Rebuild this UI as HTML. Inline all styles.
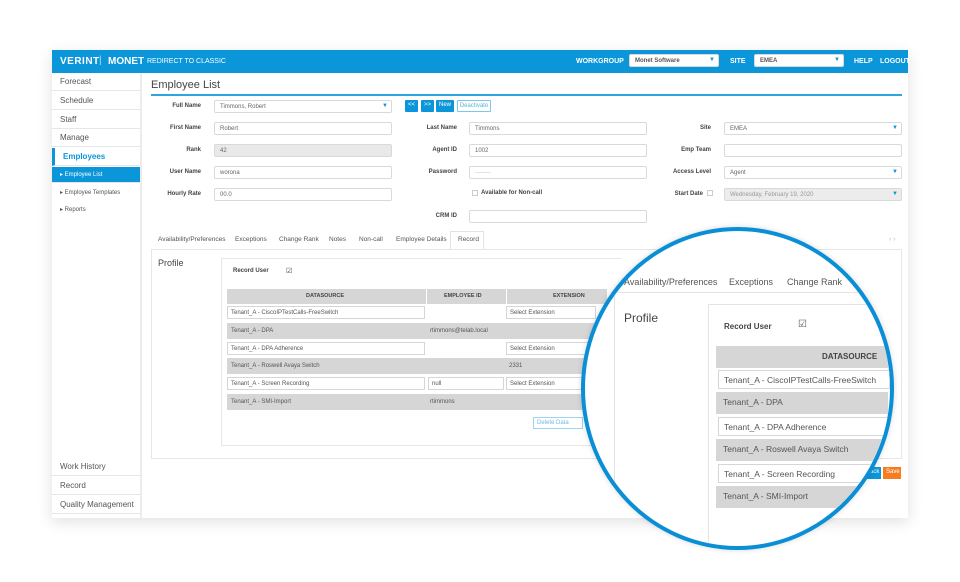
<!DOCTYPE html>
<html><head><style>
*{box-sizing:border-box;margin:0;padding:0}
body{width:960px;height:582px;background:#fff;font-family:"Liberation Sans",sans-serif;position:relative;overflow:hidden;color:#444}
.a{position:absolute}
.frame{left:52px;top:50px;width:856px;height:468px;background:#fff;box-shadow:0 4px 14px rgba(0,0,0,.12)}
.hdr{left:52px;top:50px;width:856px;height:23px;background:#0a96d8;color:#fff;font-size:7px;font-weight:bold}
.sb{left:52px;top:73px;width:90px;height:445px;border-right:2px solid #ececec;background:#fff}
.si{position:absolute;left:0;width:88px;height:18px;border-bottom:1px solid #e6e6e6;font-size:8px;color:#555;padding:4px 0 0 8px}
.lb{position:absolute;font-size:6px;color:#444;text-align:right;font-weight:bold}
.in{position:absolute;height:13px;border:1px solid #d9d9d9;border-radius:2px;font-size:6px;color:#666;padding:3px 0 0 5px;background:#fff}
.arr{position:absolute;right:3px;top:2px;font-size:6px;color:#0a96d8}
.tab{position:absolute;top:236px;font-size:6.5px;color:#555}
.row{position:absolute;left:227px;width:380px;height:16px;font-size:6px;color:#555}
.g{background:#d6d6d6}
.ci{position:absolute;height:13px;border:1px solid #d6d6d6;background:#fff;font-size:6px;padding:3px 0 0 3px;color:#555}
.btn{position:absolute;top:100px;height:12px;background:#0a96d8;color:#fff;font-size:6px;text-align:center;padding-top:2px;border-radius:1px}
</style></head><body>
<div class="a frame"></div>
<div class="a hdr">
 <span class="a" style="left:8px;top:6px;font-size:10px;letter-spacing:.5px">VERINT</span>
 <span class="a" style="left:47px;top:5px;font-size:10px;font-weight:normal;opacity:.7">|</span>
 <span class="a" style="left:56px;top:6px;font-size:10px">MONET</span>
 <span class="a" style="left:95px;top:8px;font-weight:normal">REDIRECT TO CLASSIC</span>
 <span class="a" style="left:524px;top:8px">WORKGROUP</span>
 <div class="in" style="left:577px;top:4px;width:90px;color:#555">Monet Software<span class="arr">▼</span></div>
 <span class="a" style="left:678px;top:8px">SITE</span>
 <div class="in" style="left:702px;top:4px;width:90px;color:#555">EMEA<span class="arr">▼</span></div>
 <span class="a" style="left:802px;top:8px">HELP</span>
 <span class="a" style="left:828px;top:8px">LOGOUT</span>
</div>
<div class="a sb">
 <div class="si" style="top:0">Forecast</div>
 <div class="si" style="top:19px">Schedule</div>
 <div class="si" style="top:38px">Staff</div>
 <div class="si" style="top:56px">Manage</div>
 <div class="si" style="top:75px;color:#0a96d8;font-weight:bold;border-left:3px solid #0a96d8">Employees</div>
 <div class="si" style="top:94px;height:16px;background:#0a96d8;color:#fff;font-size:6px;padding-top:4px">▸ Employee List</div>
 <div class="si" style="top:112px;border:0;font-size:6px">▸ Employee Templates</div>
 <div class="si" style="top:129px;border:0;font-size:6px">▸ Reports</div>
 <div class="si" style="top:385px">Work History</div>
 <div class="si" style="top:404px">Record</div>
 <div class="si" style="top:423px">Quality Management</div>
</div>
<div class="a" style="left:151px;top:79px;font-size:11px;color:#444">Employee List</div>
<div class="a" style="left:151px;top:94px;width:751px;height:2px;background:#2ea6dd"></div>

<div class="lb" style="left:150px;width:51px;top:103px">Full Name</div>
<div class="in" style="left:214px;top:100px;width:178px">Timmons, Robert<span class="arr">▼</span></div>
<div class="btn" style="left:405px;width:13px">&lt;&lt;</div>
<div class="btn" style="left:421px;width:13px">&gt;&gt;</div>
<div class="btn" style="left:436px;width:18px">New</div>
<div class="btn" style="left:457px;width:34px;background:#fff;border:1px solid #7cc7ec;color:#5ab3e0">Deactivate</div>

<div class="lb" style="left:150px;width:51px;top:125px">First Name</div><div class="in" style="left:214px;top:122px;width:178px">Robert</div>
<div class="lb" style="left:150px;width:51px;top:147px">Rank</div><div class="in" style="left:214px;top:144px;width:178px;background:#e9e9e9">42</div>
<div class="lb" style="left:150px;width:51px;top:169px">User Name</div><div class="in" style="left:214px;top:166px;width:178px">worona</div>
<div class="lb" style="left:150px;width:51px;top:191px">Hourly Rate</div><div class="in" style="left:214px;top:188px;width:178px">00.0</div>

<div class="lb" style="left:400px;width:57px;top:125px">Last Name</div><div class="in" style="left:469px;top:122px;width:178px">Timmons</div>
<div class="lb" style="left:400px;width:57px;top:147px">Agent ID</div><div class="in" style="left:469px;top:144px;width:178px">1002</div>
<div class="lb" style="left:400px;width:57px;top:169px">Password</div><div class="in" style="left:469px;top:166px;width:178px">········</div>
<div class="a" style="left:472px;top:190px;width:6px;height:6px;border:1px solid #ccc"></div><div class="lb" style="left:481px;top:190px">Available for Non-call</div>
<div class="lb" style="left:400px;width:57px;top:213px">CRM ID</div><div class="in" style="left:469px;top:210px;width:178px"></div>

<div class="lb" style="left:650px;width:61px;top:125px">Site</div><div class="in" style="left:724px;top:122px;width:178px">EMEA<span class="arr">▼</span></div>
<div class="lb" style="left:650px;width:61px;top:147px">Emp Team</div><div class="in" style="left:724px;top:144px;width:178px"></div>
<div class="lb" style="left:650px;width:61px;top:169px">Access Level</div><div class="in" style="left:724px;top:166px;width:178px">Agent<span class="arr">▼</span></div>
<div class="lb" style="left:650px;width:53px;top:191px">Start Date</div><div class="a" style="left:707px;top:190px;width:6px;height:6px;border:1px solid #ccc"></div>
<div class="in" style="left:724px;top:188px;width:178px;background:#ececec;color:#999">Wednesday, February 19, 2020<span class="arr">▼</span></div>

<div class="tab" style="left:158px">Availability/Preferences</div>
<div class="tab" style="left:235px">Exceptions</div>
<div class="tab" style="left:279px">Change Rank</div>
<div class="tab" style="left:329px">Notes</div>
<div class="tab" style="left:359px">Non-call</div>
<div class="tab" style="left:396px">Employee Details</div>
<div class="a" style="left:450px;top:231px;width:34px;height:19px;border:1px solid #e3e3e3;border-bottom:none;background:#fff"></div>
<div class="tab" style="left:458px">Record</div>
<div class="a" style="left:889px;top:236px;font-size:7px;color:#bbb">‹ ›</div>
<div class="a" style="left:151px;top:249px;width:751px;height:210px;border:1px solid #e6e6e6"></div>
<div class="a" style="left:158px;top:258px;font-size:9px;color:#444">Profile</div>
<div class="a" style="left:221px;top:258px;width:400px;height:188px;border:1px solid #e6e6e6;border-right:none"></div>
<div class="lb" style="left:233px;top:268px">Record User</div>
<div class="a" style="left:286px;top:267px;font-size:7px">☑</div>
<div class="row g" style="top:289px;height:15px;font-weight:bold;font-size:5.5px;color:#444">
 <span class="a" style="left:79px;top:4px">DATASOURCE</span><span class="a" style="left:217px;top:4px">EMPLOYEE ID</span><span class="a" style="left:326px;top:4px">EXTENSION</span>
 <span class="a" style="left:199px;top:0;width:1px;height:15px;background:#fff"></span><span class="a" style="left:279px;top:0;width:1px;height:15px;background:#fff"></span></div>
<div class="ci" style="left:227px;top:306px;width:198px">Tenant_A - CiscoIPTestCalls-FreeSwitch</div><div class="ci" style="left:506px;top:306px;width:90px">Select Extension</div>
<div class="row g" style="top:323px"><span class="a" style="left:4px;top:5px">Tenant_A - DPA</span><span class="a" style="left:203px;top:5px">rtimmons@telab.local</span></div>
<div class="ci" style="left:227px;top:342px;width:198px">Tenant_A - DPA Adherence</div><div class="ci" style="left:506px;top:342px;width:90px">Select Extension</div>
<div class="row g" style="top:358px"><span class="a" style="left:4px;top:5px">Tenant_A - Roswell Avaya Switch</span><span class="a" style="left:282px;top:5px">2331</span></div>
<div class="ci" style="left:227px;top:377px;width:198px">Tenant_A - Screen Recording</div><div class="ci" style="left:428px;top:377px;width:76px">null</div><div class="ci" style="left:506px;top:377px;width:90px">Select Extension</div>
<div class="row g" style="top:394px"><span class="a" style="left:4px;top:5px">Tenant_A - SMI-Import</span><span class="a" style="left:203px;top:5px">rtimmons</span></div>
<div class="a" style="left:533px;top:417px;width:50px;height:12px;border:1px solid #9fd3ef;font-size:6px;color:#6bbbe6;padding:2px 3px">Delete Data</div>
<div class="a" style="left:864px;top:467px;width:17px;height:12px;background:#0a96d8;color:#fff;font-size:6px;padding:2px">Back</div>
<div class="a" style="left:883px;top:467px;width:18px;height:12px;background:#f57c1f;color:#fff;font-size:6px;padding:2px 3px">Save</div>

<div class="a" style="left:581px;top:227px;width:313px;height:323px;border-radius:50%;border:4px solid #0a8fd6;background:#fff;overflow:hidden;box-shadow:0 0 6px rgba(0,0,0,.15)">
 <div class="a" style="left:-9px;top:-5px;width:330px;height:340px;font-size:9px;color:#555">
  <span class="a" style="left:48px;top:51px">Availability/Preferences</span>
  <span class="a" style="left:153px;top:51px">Exceptions</span>
  <span class="a" style="left:211px;top:51px">Change Rank</span>
  <span class="a" style="left:303px;top:51px;font-size:6px;color:#0a96d8">▼</span>
  <span class="a" style="left:303px;top:73px;font-size:6px;color:#0a96d8">▼</span>
  <span class="a" style="left:303px;top:95px;font-size:6px;color:#0a96d8">▼</span>
  <div class="a" style="left:38px;top:66px;width:280px;height:300px;border:1px solid #e3e3e3;border-right:none"></div>
  <span class="a" style="left:48px;top:85px;font-size:12px;color:#444">Profile</span>
  <div class="a" style="left:132px;top:78px;width:200px;height:300px;border:1px solid #e3e3e3;border-right:none"></div>
  <span class="a" style="left:148px;top:96px;font-size:8px;font-weight:bold;color:#444">Record User</span>
  <span class="a" style="left:222px;top:93px;font-size:10px">☑</span>
  <div class="a g" style="left:140px;top:120px;width:172px;height:22px;font-size:8px;font-weight:bold;color:#444;padding:6px 0 0 106px">DATASOURCE</div>
  <div class="ci" style="left:142px;top:144px;width:172px;height:19px;font-size:8.5px;padding:4px 0 0 5px">Tenant_A - CiscoIPTestCalls-FreeSwitch</div>
  <div class="a g" style="left:140px;top:166px;width:172px;height:22px;font-size:8.5px;padding:5px 0 0 7px">Tenant_A - DPA</div>
  <div class="ci" style="left:142px;top:191px;width:172px;height:19px;font-size:8.5px;padding:4px 0 0 5px">Tenant_A - DPA Adherence</div>
  <div class="a g" style="left:140px;top:213px;width:172px;height:22px;font-size:8.5px;padding:5px 0 0 7px">Tenant_A - Roswell Avaya Switch</div>
  <div class="ci" style="left:142px;top:238px;width:172px;height:19px;font-size:8.5px;padding:4px 0 0 5px">Tenant_A - Screen Recording</div>
  <div class="a g" style="left:140px;top:260px;width:172px;height:22px;font-size:8.5px;padding:5px 0 0 7px">Tenant_A - SMI-Import</div>
 </div>
</div>
</body></html>
